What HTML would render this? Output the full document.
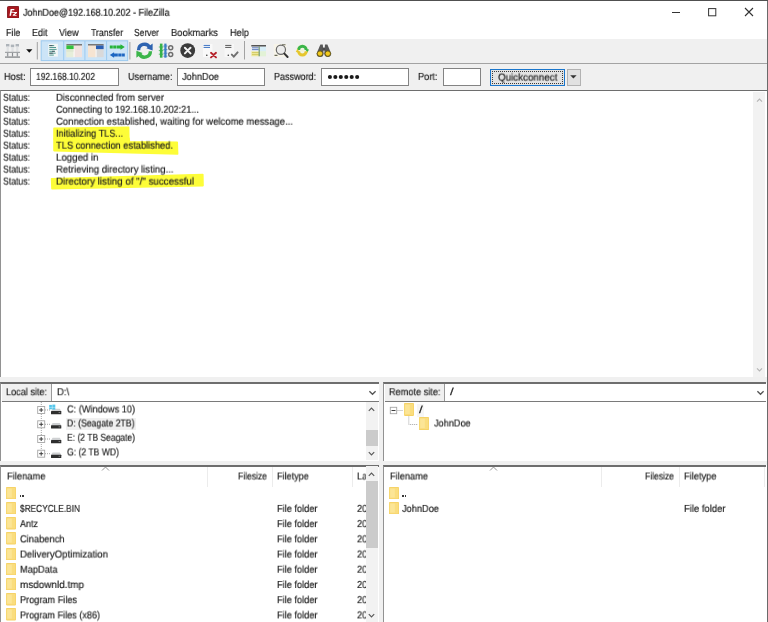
<!DOCTYPE html>
<html>
<head>
<meta charset="utf-8">
<title>JohnDoe@192.168.10.202 - FileZilla</title>
<style>
*{box-sizing:border-box;margin:0;padding:0}
html,body{width:768px;height:622px;overflow:hidden;background:#fff}
body{position:relative;font-family:"Liberation Sans",sans-serif;font-size:10.2px;color:#222}
.abs{position:absolute}
.t{position:absolute;white-space:nowrap;line-height:12px;height:12px;color:#1c1c1c;-webkit-text-stroke:0.18px #1c1c1c;text-rendering:geometricPrecision;transform-origin:0 50%;will-change:transform}
.win-top{left:0;top:0;width:768px;height:1px;background:#505050}
.win-right{left:766.5px;top:1px;width:1.5px;height:621px;background:#6a6a6a}
.toolbar{left:0;top:39px;width:767px;height:24px;background:#f0f0f0}
.qc{left:0;top:63px;width:767px;height:27px;background:#f0f0f0;border-top:1px solid #a3a3a3}
.inp{position:absolute;background:#fff;border:1px solid #838383;height:17.8px;top:68.4px}
.panel{position:absolute;background:#fff;border-top:2px solid #6e6e6e;border-left:1.7px solid #929292}
.sb{position:absolute;background:#f2f2f2}
.thumb{position:absolute;background:#cbcbcb}
.sep{position:absolute;background:#f0f0f0}
.lbl{position:absolute;background:#f0f0f0;border-right:1px solid #9a9a9a}
.hline{position:absolute;height:1px;background:#7a7a7a}
.colsep{position:absolute;width:1px;background:#ececec;top:466.5px;height:20px}
.fold{position:absolute;width:10px;height:12.5px}
.hl{position:absolute;background:#fcfc3a}
.sel{position:absolute;background:#f0f0f0}
</style>
</head>
<body>
<div class="abs win-top"></div>

<!-- app icon -->
<svg class="abs" style="left:6.6px;top:5.6px" width="12.5" height="12.6" viewBox="0 0 14 14">
 <rect x="0.5" y="0.5" width="13" height="13" rx="1.2" fill="#a8181f" stroke="#7d1117" stroke-width="1"/>
 <path d="M2.8 11 L4 3.2 H8.3 L8.1 4.6 H5.5 L5.2 6.3 H7.3 L7.1 7.6 H5 L4.5 11 Z" fill="#fff"/>
 <path d="M7.2 6.6 H11.3 L11.1 7.8 L8.6 9.9 H10.8 L10.6 11 H6.4 L6.6 9.8 L9.1 7.7 H7 Z" fill="#fff"/>
</svg>
<!-- window buttons -->
<svg class="abs" style="left:668px;top:4px" width="96" height="16" viewBox="0 0 96 16">
 <path d="M4 8.5 H12" stroke="#333" stroke-width="1" fill="none"/>
 <rect x="40.6" y="4.6" width="7.2" height="7.2" stroke="#333" stroke-width="1" fill="none"/>
 <path d="M77 4 L85 12 M85 4 L77 12" stroke="#333" stroke-width="1.1" fill="none"/>
</svg>

<!-- toolbar -->
<div class="abs toolbar"></div>
<svg class="abs" style="left:0;top:38px" width="340" height="28" viewBox="0 38 340 28">
 <defs>
  <filter id="b3" x="-20%" y="-20%" width="140%" height="140%"><feGaussianBlur stdDeviation="0.45"/></filter>
 </defs>
 <!-- toggle group bg -->
 <rect x="41.2" y="40.8" width="86.5" height="19.8" fill="#cce4f7" stroke="#9ccaf0" stroke-width="1"/>
 <path d="M63.7 41 V60.5 M84.9 41 V60.5 M106.6 41 V60.5" stroke="#9ccaf0" stroke-width="1"/>
 <!-- separators -->
 <path d="M37.3 42 V59.5 M129.9 42 V59.5 M244.5 41 V59.5" stroke="#a2a2a2" stroke-width="1"/>
 <g filter="url(#b3)">
 <!-- site manager -->
 <g fill="#b9bcc0" stroke="none">
  <rect x="6" y="44" width="3.4" height="2.6" fill="#aeb4ba"/><rect x="10.8" y="44.6" width="3.4" height="2.6" fill="#aeb4ba"/><rect x="15.6" y="44" width="3.4" height="2.6" fill="#aeb4ba"/>
  <rect x="6.6" y="46.5" width="2.2" height="9.5" fill="#dfe1e3"/><rect x="11.4" y="47" width="2.2" height="9" fill="#dfe1e3"/><rect x="16.2" y="46.5" width="2.2" height="9.5" fill="#dfe1e3"/>
  <rect x="5" y="51.8" width="15" height="1.1" fill="#9a9da0"/>
  <rect x="5" y="56.4" width="15" height="1.4" fill="#8b8e91"/>
  <rect x="7.2" y="53" width="1" height="3.5" fill="#8b8e91"/><rect x="12" y="53" width="1" height="3.5" fill="#8b8e91"/><rect x="16.8" y="53" width="1" height="3.5" fill="#8b8e91"/>
 </g>
 <path d="M26.2 49.3 H32.4 L29.3 52.7 Z" fill="#111"/>
 <!-- toggle 1: log doc -->
 <rect x="48.3" y="43.8" width="9.6" height="12.8" fill="#f4f7f6"/>
 <g stroke="#3f8f86" stroke-width="0.9">
  <path d="M49.3 45.6 H54.2 M49.3 47.5 H56 M49.3 49.4 H56.6 M49.3 51.3 H54.8 M49.3 53.2 H55.6 M49.3 55.1 H53.8"/>
 </g>
 <g stroke="#4a5560" stroke-width="0.9"><path d="M49.3 45.6 H52.5 M52 51.3 H54.8 M49.3 53.2 H52.8"/></g>
 <!-- toggle 2: local tree -->
 <rect x="66.4" y="44" width="15.6" height="13.2" fill="#f1e2de"/>
 <rect x="66.4" y="44" width="7.4" height="13.2" fill="#e6eeda"/>
 <rect x="73.6" y="49" width="0.9" height="8.2" fill="#fff"/>
 <rect x="66.4" y="44" width="15.6" height="1.5" fill="#777"/>
 <rect x="66.4" y="45.5" width="7.2" height="3.6" fill="#30c23c"/>
 <rect x="66.4" y="50.5" width="7.2" height="0.9" fill="#d5dfc6"/>
 <!-- toggle 3: remote tree -->
 <rect x="88" y="44" width="15.6" height="13.2" fill="#d9d9d9"/>
 <rect x="88" y="44" width="7.8" height="13.2" fill="#f6e4d2"/>
 <rect x="95.6" y="49" width="0.9" height="8.2" fill="#fff"/>
 <rect x="88" y="44" width="15.6" height="1.5" fill="#777"/>
 <rect x="96" y="45.5" width="7.6" height="3.6" fill="#2b5fb4"/>
 <!-- toggle 4: queue arrows -->
 <path d="M109.8 45.6 H120.5 V44.2 L124.8 47 L120.5 49.8 V48.4 H109.8 Z" fill="#27b43a"/>
 <path d="M124.8 53.6 H114.1 V52.2 L109.8 55 L114.1 57.8 V56.4 H124.8 Z" fill="#1f66c2"/>
 <path d="M113 44.9 V49.1 M116.5 44.9 V49.1 M118.1 52.9 V57.1 M121.6 52.9 V57.1" stroke="#cce4f7" stroke-width="0.7" opacity=".6"/>
 <!-- refresh -->
 <path d="M138.6 50.2 A5.9 5.9 0 0 1 149.6 47.2" stroke="#2e63b0" stroke-width="3.4" fill="none"/>
 <path d="M146.4 48.3 L152.6 43.6 L152.6 50.6 Z" fill="#2e63b0"/>
 <path d="M150.4 51.2 A5.9 5.9 0 0 1 139.4 54.2" stroke="#3bb54a" stroke-width="3.4" fill="none"/>
 <path d="M142.6 53.1 L136.4 57.8 L136.4 50.8 Z" fill="#3bb54a"/>
 <!-- filter -->
 <rect x="159.9" y="43.6" width="2.6" height="14.1" fill="#37b24a"/>
 <rect x="164.3" y="43.6" width="2.2" height="14.1" fill="#3c7ec4"/>
 <path d="M158.8 47 H163.4 M158.8 50.6 H163.4 M158.8 54.2 H163.4" stroke="#37b24a" stroke-width="0.8"/>
 <path d="M163.4 46 H167.4 M163.4 49.6 H167.4 M163.4 53.2 H167.4 M163.4 56.2 H167.4" stroke="#3c7ec4" stroke-width="0.8"/>
 <circle cx="170.7" cy="47.8" r="2" fill="none" stroke="#6e6e6e" stroke-width="1.5"/>
 <circle cx="170.7" cy="54.4" r="2" fill="none" stroke="#6e6e6e" stroke-width="1.5"/>
 <!-- cancel -->
 <circle cx="187.7" cy="50.6" r="7.4" fill="#3a3a3a"/>
 <path d="M184.9 47.8 L190.5 53.4 M190.5 47.8 L184.9 53.4" stroke="#f4f4f4" stroke-width="2" stroke-linecap="round"/>
 <!-- disconnect -->
 <rect x="203" y="44" width="9.5" height="13" fill="#f9f9f9"/>
 <path d="M203.6 45.4 H210 M203.6 47.4 H210" stroke="#3a6fc0" stroke-width="1"/>
 <circle cx="206.8" cy="55.3" r="0.8" fill="#333"/>
 <path d="M211 52.8 L216 57.4 M216 52.8 L211 57.4" stroke="#b5202a" stroke-width="1.9" stroke-linecap="round"/>
 <!-- reconnect -->
 <rect x="224.5" y="44" width="9.5" height="13" fill="#f7f7f7"/>
 <path d="M225.2 45.4 H231.4 M225.2 47.4 H231.4" stroke="#555" stroke-width="1"/>
 <circle cx="228.3" cy="55.3" r="0.8" fill="#333"/>
 <path d="M231.8 54.6 L233.8 56.6 L237.6 52.4" stroke="#707070" stroke-width="2" fill="none" stroke-linecap="round"/>
 <!-- queue view -->
 <rect x="251.3" y="46.5" width="7.6" height="4.8" fill="#e9edf6"/>
 <rect x="259.4" y="46.5" width="6.6" height="4.8" fill="#d8eef8"/>
 <rect x="251.3" y="51.3" width="7.6" height="5" fill="#eeeaa0"/>
 <rect x="259.4" y="51.3" width="6.6" height="5" fill="#e2f2d6"/>
 <rect x="251.3" y="45" width="14.7" height="1.5" fill="#555"/>
 <path d="M252 47.8 H258.6 M252 49.6 H258.6" stroke="#5274b8" stroke-width="0.9"/>
 <path d="M252 52.6 H258.6 M252 54.6 H258.6" stroke="#cfc65a" stroke-width="0.9"/>
 <rect x="258.7" y="46.5" width="0.9" height="9.8" fill="#4d7a4d"/>
 <!-- search -->
 <rect x="273.8" y="44" width="12.6" height="13" fill="#f7f4e9"/>
 <path d="M274.5 55.4 H277.5 M282 44.8 H285.5" stroke="#6a6a5a" stroke-width="1.1"/>
 <circle cx="280.9" cy="49.8" r="4.6" fill="#ececec" stroke="#6a6a6a" stroke-width="1.2"/>
 <path d="M284.4 53.6 L287.6 57" stroke="#333" stroke-width="2" stroke-linecap="round"/>
 <!-- sync browse -->
 <circle cx="302.4" cy="50.4" r="6.4" fill="#eef4e2" opacity=".9"/>
 <path d="M298.6 50 A3.8 3.8 0 0 1 306.2 50" stroke="#3bb54a" stroke-width="3" fill="none"/>
 <path d="M305 49 L309 49.4 L307.4 52.6 Z" fill="#3bb54a"/>
 <path d="M306.2 51.2 A3.8 3.8 0 0 1 298.6 51.2" stroke="#e6c62e" stroke-width="3" fill="none"/>
 <path d="M299.8 52.4 L295.8 52 L297.4 48.8 Z" fill="#e6c62e"/>
 <circle cx="302.4" cy="50.6" r="1.2" fill="#f5f1cf"/>
 <!-- binoculars -->
 <path d="M320.4 44.4 H322.8 L323.6 53.5 A3.4 3.4 0 0 1 316.6 53.5 Z" fill="#575757"/>
 <path d="M325 44.4 H327.4 L331.2 53.5 A3.4 3.4 0 0 1 324.3 53.5 Z" fill="#575757"/>
 <rect x="322.6" y="47.6" width="2.6" height="3" fill="#4a4a4a"/>
 <circle cx="320" cy="53.6" r="2.7" fill="#f2c91e" stroke="#6a5a10" stroke-width="0.9"/>
 <circle cx="327.8" cy="53.6" r="2.7" fill="#f2c91e" stroke="#6a5a10" stroke-width="0.9"/>
 </g>
</svg>


<!-- quickconnect bar -->
<div class="abs qc"></div>
<div class="inp" style="left:30.2px;width:88.4px"></div>
<div class="inp" style="left:177px;width:88px"></div>
<div class="inp" style="left:321px;width:88px"></div>
<div class="inp" style="left:443px;width:38px"></div>
<!-- password dots -->
<svg class="abs" style="left:324px;top:73px" width="40" height="8">
 <g fill="#1a1a1a"><circle cx="5.90" cy="4" r="2.05"/><circle cx="11.35" cy="4" r="2.05"/><circle cx="16.80" cy="4" r="2.05"/><circle cx="22.25" cy="4" r="2.05"/><circle cx="27.70" cy="4" r="2.05"/><circle cx="33.15" cy="4" r="2.05"/></g>
</svg>
<!-- quickconnect button -->
<div class="abs" style="left:490px;top:68.8px;width:74.8px;height:17px;background:#e3e3e3;border:1.6px solid #1a76cc"></div>
<div class="abs" style="left:492px;top:70.6px;width:70.8px;height:13.4px;border:1px dotted #3a3a3a"></div>
<div class="abs" style="left:566.5px;top:68.8px;width:14.6px;height:17px;background:#e1e1e1;border:1px solid #b2b2b2"></div>
<svg class="abs" style="left:570.2px;top:75px" width="7" height="4"><path d="M0.2 0.2 H6.6 L3.4 3.6 Z" fill="#333"/></svg>

<!-- log panel -->
<div class="panel" style="left:0;top:89.7px;width:767px;height:287.3px;border-top-width:1.6px"></div>
<svg class="abs" style="left:44px;top:120px" width="170" height="76" viewBox="44 120 170 76">
 <g fill="#fdfd38" stroke="#fdfd38" stroke-width="1.6" stroke-linejoin="round" filter="url(#b3)">
  <path d="M54 128.4 L128.6 127.2 L128.8 138.2 L54 139 Z"/>
  <path d="M54 139 L129 138.4 L129.4 141.8 L177.2 142.2 L177.6 154 L54 150.6 Z"/>
  <path d="M51.6 178.8 L202.8 174.6 L203 185.6 L52 188.6 Z"/>
 </g>
</svg>
<div class="sb" style="left:753.3px;top:92px;width:11.9px;height:285px;background:#f2f2f2"></div>
<svg class="abs" style="left:754.8px;top:96.5px" width="9" height="6"><path d="M2 4.6 L4.5 2.1 L7 4.6" stroke="#b6b6b6" stroke-width="1.2" fill="none"/></svg>
<svg class="abs" style="left:754.8px;top:367px" width="9" height="6"><path d="M2 1.4 L4.5 3.9 L7 1.4" stroke="#b6b6b6" stroke-width="1.2" fill="none"/></svg>

<!-- splitters -->
<div class="sep" style="left:0;top:377px;width:767px;height:6px"></div>
<div class="sep" style="left:378.5px;top:377px;width:5px;height:245px"></div>
<div class="sep" style="left:0;top:460.5px;width:767px;height:4.5px"></div>

<!-- local site -->
<div class="panel" style="left:0;top:382px;width:378.5px;height:78.5px"></div>
<div class="lbl" style="left:2px;top:384px;width:49.5px;height:17.2px"></div>
<div class="hline" style="left:1.5px;top:400.9px;width:377px"></div>
<svg class="abs" style="left:367.5px;top:390px" width="9" height="6"><path d="M1.4 1.2 L4.5 4.2 L7.6 1.2" stroke="#555" stroke-width="1.35" fill="none"/></svg>
<!-- local tree -->
<div class="sel" style="left:65.5px;top:417.5px;width:70.5px;height:12.8px"></div>
<svg class="abs" style="left:30px;top:401px" width="40" height="60" viewBox="30 401 40 60"><g filter="url(#b3)"><path d="M41.3 402 V453.7" stroke="#9a9a9a" stroke-width="0.9" stroke-dasharray="1 1"/><path d="M45 410 H50" stroke="#9a9a9a" stroke-width="0.9" stroke-dasharray="1 1"/><rect x="37.7" y="406.5" width="7.0" height="7.0" fill="#fff" stroke="#a6a6a6" stroke-width="0.9"/><path d="M39.2 410 H43.2 M41.2 408 V412" stroke="#3c3c3c" stroke-width="1"/><path d="M52.6 408.8 H59.8 L61.3 411.2 H51 Z" fill="#cfd1d3"/><rect x="51" y="411.0" width="10.3" height="3.2" rx="0.5" fill="#2e2e2e"/><rect x="58.6" y="412.09999999999997" width="1.6" height="0.9" fill="#8a8a8a"/><g fill="#55c6eb"><rect x="49.2" y="404.9" width="2.7" height="2.1"/><rect x="52.3" y="404.59999999999997" width="3" height="2.4"/><rect x="49.2" y="407.3" width="2.7" height="2"/><rect x="52.3" y="407.3" width="3" height="2.3"/></g><path d="M45 424.3 H50" stroke="#9a9a9a" stroke-width="0.9" stroke-dasharray="1 1"/><rect x="37.7" y="420.8" width="7.0" height="7.0" fill="#fff" stroke="#a6a6a6" stroke-width="0.9"/><path d="M39.2 424.3 H43.2 M41.2 422.3 V426.3" stroke="#3c3c3c" stroke-width="1"/><path d="M52.6 423.1 H59.8 L61.3 425.5 H51 Z" fill="#cfd1d3"/><rect x="51" y="425.3" width="10.3" height="3.2" rx="0.5" fill="#2e2e2e"/><rect x="58.6" y="426.4" width="1.6" height="0.9" fill="#8a8a8a"/><path d="M45 439 H50" stroke="#9a9a9a" stroke-width="0.9" stroke-dasharray="1 1"/><rect x="37.7" y="435.5" width="7.0" height="7.0" fill="#fff" stroke="#a6a6a6" stroke-width="0.9"/><path d="M39.2 439 H43.2 M41.2 437 V441" stroke="#3c3c3c" stroke-width="1"/><path d="M52.6 437.8 H59.8 L61.3 440.2 H51 Z" fill="#cfd1d3"/><rect x="51" y="440.0" width="10.3" height="3.2" rx="0.5" fill="#2e2e2e"/><rect x="58.6" y="441.09999999999997" width="1.6" height="0.9" fill="#8a8a8a"/><path d="M45 453.7 H50" stroke="#9a9a9a" stroke-width="0.9" stroke-dasharray="1 1"/><rect x="37.7" y="450.2" width="7.0" height="7.0" fill="#fff" stroke="#a6a6a6" stroke-width="0.9"/><path d="M39.2 453.7 H43.2 M41.2 451.7 V455.7" stroke="#3c3c3c" stroke-width="1"/><path d="M52.6 452.5 H59.8 L61.3 454.9 H51 Z" fill="#cfd1d3"/><rect x="51" y="454.7" width="10.3" height="3.2" rx="0.5" fill="#2e2e2e"/><rect x="58.6" y="455.79999999999995" width="1.6" height="0.9" fill="#8a8a8a"/></g></svg>
<div class="sb" style="left:366px;top:402.2px;width:12px;height:57.8px"></div>
<svg class="abs" style="left:366.8px;top:406px" width="9" height="6"><path d="M1.8 4.8 L4.5 2 L7.2 4.8" stroke="#5a5a5a" stroke-width="1.15" fill="none"/></svg>
<div class="thumb" style="left:366px;top:430px;width:12px;height:16px"></div>
<svg class="abs" style="left:366.8px;top:450.5px" width="9" height="6"><path d="M1.8 1.2 L4.5 4 L7.2 1.2" stroke="#5a5a5a" stroke-width="1.15" fill="none"/></svg>

<!-- local list -->
<div class="panel" style="left:0;top:464.8px;width:378.5px;height:158px"></div>
<svg class="abs" style="left:100.5px;top:465.5px" width="9" height="5"><path d="M1 4.5 L4.5 1 L8 4.5" stroke="#8a8a8a" stroke-width="0.9" fill="none"/></svg>
<div class="colsep" style="left:206.5px"></div><div class="colsep" style="left:271.5px"></div><div class="colsep" style="left:351.5px"></div>
<svg class="abs" style="left:6.3px;top:486.8px" width="10" height="12.4" viewBox="0 0 10 12.4" preserveAspectRatio="none"><rect x="0" y="0" width="10" height="12.4" rx="0.8" fill="#f5d266"/><rect x="0.5" y="0.9" width="8.8" height="10.6" fill="#fadd7e"/><rect x="1.2" y="1.6" width="4.6" height="9" fill="#fce596"/></svg>
<svg class="abs" style="left:6.3px;top:501.99px" width="10" height="12.4" viewBox="0 0 10 12.4" preserveAspectRatio="none"><rect x="0" y="0" width="10" height="12.4" rx="0.8" fill="#f5d266"/><rect x="0.5" y="0.9" width="8.8" height="10.6" fill="#fadd7e"/><rect x="1.2" y="1.6" width="4.6" height="9" fill="#fce596"/></svg>
<svg class="abs" style="left:6.3px;top:517.1800000000001px" width="10" height="12.4" viewBox="0 0 10 12.4" preserveAspectRatio="none"><rect x="0" y="0" width="10" height="12.4" rx="0.8" fill="#f5d266"/><rect x="0.5" y="0.9" width="8.8" height="10.6" fill="#fadd7e"/><rect x="1.2" y="1.6" width="4.6" height="9" fill="#fce596"/></svg>
<svg class="abs" style="left:6.3px;top:532.37px" width="10" height="12.4" viewBox="0 0 10 12.4" preserveAspectRatio="none"><rect x="0" y="0" width="10" height="12.4" rx="0.8" fill="#f5d266"/><rect x="0.5" y="0.9" width="8.8" height="10.6" fill="#fadd7e"/><rect x="1.2" y="1.6" width="4.6" height="9" fill="#fce596"/></svg>
<svg class="abs" style="left:6.3px;top:547.5600000000001px" width="10" height="12.4" viewBox="0 0 10 12.4" preserveAspectRatio="none"><rect x="0" y="0" width="10" height="12.4" rx="0.8" fill="#f5d266"/><rect x="0.5" y="0.9" width="8.8" height="10.6" fill="#fadd7e"/><rect x="1.2" y="1.6" width="4.6" height="9" fill="#fce596"/></svg>
<svg class="abs" style="left:6.3px;top:562.75px" width="10" height="12.4" viewBox="0 0 10 12.4" preserveAspectRatio="none"><rect x="0" y="0" width="10" height="12.4" rx="0.8" fill="#f5d266"/><rect x="0.5" y="0.9" width="8.8" height="10.6" fill="#fadd7e"/><rect x="1.2" y="1.6" width="4.6" height="9" fill="#fce596"/></svg>
<svg class="abs" style="left:6.3px;top:577.94px" width="10" height="12.4" viewBox="0 0 10 12.4" preserveAspectRatio="none"><rect x="0" y="0" width="10" height="12.4" rx="0.8" fill="#f5d266"/><rect x="0.5" y="0.9" width="8.8" height="10.6" fill="#fadd7e"/><rect x="1.2" y="1.6" width="4.6" height="9" fill="#fce596"/></svg>
<svg class="abs" style="left:6.3px;top:593.13px" width="10" height="12.4" viewBox="0 0 10 12.4" preserveAspectRatio="none"><rect x="0" y="0" width="10" height="12.4" rx="0.8" fill="#f5d266"/><rect x="0.5" y="0.9" width="8.8" height="10.6" fill="#fadd7e"/><rect x="1.2" y="1.6" width="4.6" height="9" fill="#fce596"/></svg>
<svg class="abs" style="left:6.3px;top:608.32px" width="10" height="12.4" viewBox="0 0 10 12.4" preserveAspectRatio="none"><rect x="0" y="0" width="10" height="12.4" rx="0.8" fill="#f5d266"/><rect x="0.5" y="0.9" width="8.8" height="10.6" fill="#fadd7e"/><rect x="1.2" y="1.6" width="4.6" height="9" fill="#fce596"/></svg>
<div class="sb" style="left:365.5px;top:466px;width:12.5px;height:156px"></div>
<svg class="abs" style="left:367px;top:470.8px" width="9" height="6"><path d="M1.8 4.8 L4.5 2 L7.2 4.8" stroke="#5a5a5a" stroke-width="1.15" fill="none"/></svg>
<div class="thumb" style="left:365.5px;top:480.8px;width:12.5px;height:67px"></div>
<svg class="abs" style="left:367px;top:612.5px" width="9" height="6"><path d="M1.8 1.2 L4.5 4 L7.2 1.2" stroke="#5a5a5a" stroke-width="1.15" fill="none"/></svg>

<!-- remote site -->
<div class="panel" style="left:383.2px;top:382px;width:382.5px;height:78.5px"></div>
<div class="lbl" style="left:385.2px;top:384px;width:59.5px;height:17.2px"></div>
<div class="hline" style="left:384.7px;top:400.9px;width:381px"></div>
<svg class="abs" style="left:756px;top:390px" width="9" height="6"><path d="M1.4 1.2 L4.5 4.2 L7.6 1.2" stroke="#555" stroke-width="1.35" fill="none"/></svg>
<svg class="abs" style="left:386px;top:401px" width="50" height="32" viewBox="386 401 50 32"><g filter="url(#b3)"><path d="M397.5 410.5 H403.5 M408.8 415.5 V424.5 H418" stroke="#9a9a9a" stroke-width="0.9" stroke-dasharray="1 1" fill="none"/><rect x="390.3" y="407.3" width="6.4" height="6.4" fill="#fff" stroke="#a6a6a6" stroke-width="0.9"/><path d="M391.5 410.5 H395.5" stroke="#3c3c3c" stroke-width="1"/></g></svg><div class="sel" style="left:417.3px;top:404px;width:7px;height:12.8px;background:#f6f6f6"></div><svg class="abs" style="left:403.8px;top:402.7px" width="10" height="12.9" viewBox="0 0 10 12.4" preserveAspectRatio="none"><rect x="0" y="0" width="10" height="12.4" rx="0.8" fill="#f5d266"/><rect x="0.5" y="0.9" width="8.8" height="10.6" fill="#fadd7e"/><rect x="1.2" y="1.6" width="4.6" height="9" fill="#fce596"/></svg><svg class="abs" style="left:418.9px;top:416.6px" width="10" height="13" viewBox="0 0 10 12.4" preserveAspectRatio="none"><rect x="0" y="0" width="10" height="12.4" rx="0.8" fill="#f5d266"/><rect x="0.5" y="0.9" width="8.8" height="10.6" fill="#fadd7e"/><rect x="1.2" y="1.6" width="4.6" height="9" fill="#fce596"/></svg>

<!-- remote list -->
<div class="panel" style="left:383.2px;top:464.8px;width:382.5px;height:158px"></div>
<svg class="abs" style="left:488.5px;top:465.5px" width="9" height="5"><path d="M1 4.5 L4.5 1 L8 4.5" stroke="#8a8a8a" stroke-width="0.9" fill="none"/></svg>
<div class="colsep" style="left:601px"></div><div class="colsep" style="left:678.5px"></div><div class="colsep" style="left:764px"></div>
<svg class="abs" style="left:389.4px;top:486.8px" width="10" height="12.4" viewBox="0 0 10 12.4" preserveAspectRatio="none"><rect x="0" y="0" width="10" height="12.4" rx="0.8" fill="#f5d266"/><rect x="0.5" y="0.9" width="8.8" height="10.6" fill="#fadd7e"/><rect x="1.2" y="1.6" width="4.6" height="9" fill="#fce596"/></svg><svg class="abs" style="left:389.4px;top:502.0px" width="10" height="12.4" viewBox="0 0 10 12.4" preserveAspectRatio="none"><rect x="0" y="0" width="10" height="12.4" rx="0.8" fill="#f5d266"/><rect x="0.5" y="0.9" width="8.8" height="10.6" fill="#fadd7e"/><rect x="1.2" y="1.6" width="4.6" height="9" fill="#fce596"/></svg>

<div class="t" style="left:23.00px;top:7px;transform:translateY(0.80px) scaleX(0.8820);color:#0c0c0c">JohnDoe@192.168.10.202 - FileZilla</div>
<div class="t" style="left:5.70px;top:28px;transform:translateY(0.00px) scaleX(0.8708)">File</div>
<div class="t" style="left:31.50px;top:28px;transform:translateY(0.00px) scaleX(0.8826)">Edit</div>
<div class="t" style="left:58.50px;top:28px;transform:translateY(0.00px) scaleX(0.8993)">View</div>
<div class="t" style="left:90.50px;top:28px;transform:translateY(0.00px) scaleX(0.8519)">Transfer</div>
<div class="t" style="left:134.00px;top:28px;transform:translateY(0.00px) scaleX(0.8329)">Server</div>
<div class="t" style="left:171.00px;top:28px;transform:translateY(0.00px) scaleX(0.9224)">Bookmarks</div>
<div class="t" style="left:229.50px;top:28px;transform:translateY(0.00px) scaleX(0.9068)">Help</div>
<div class="t" style="left:3.70px;top:71px;transform:translateY(0.90px) scaleX(0.9083)">Host:</div>
<div class="t" style="left:36.00px;top:71px;transform:translateY(0.90px) scaleX(0.8330)">192.168.10.202</div>
<div class="t" style="left:128.00px;top:71px;transform:translateY(0.90px) scaleX(0.8931)">Username:</div>
<div class="t" style="left:181.50px;top:71px;transform:translateY(0.90px) scaleX(0.9073)">JohnDoe</div>
<div class="t" style="left:274.00px;top:71px;transform:translateY(0.90px) scaleX(0.8830)">Password:</div>
<div class="t" style="left:418.00px;top:71px;transform:translateY(0.90px) scaleX(0.9063)">Port:</div>
<div class="t" style="left:497.70px;top:72px;transform:translateY(0.60px) scaleX(0.9606)">Quickconnect</div>
<div class="t" style="left:3.00px;top:92px;transform:translateY(0.80px) scaleX(0.8512)">Status:</div>
<div class="t" style="left:56.00px;top:92px;transform:translateY(0.80px) scaleX(0.9304)">Disconnected from server</div>
<div class="t" style="left:3.00px;top:104px;transform:translateY(0.77px) scaleX(0.8512)">Status:</div>
<div class="t" style="left:56.00px;top:104px;transform:translateY(0.77px) scaleX(0.8984)">Connecting to 192.168.10.202:21...</div>
<div class="t" style="left:3.00px;top:116px;transform:translateY(0.74px) scaleX(0.8512)">Status:</div>
<div class="t" style="left:56.00px;top:116px;transform:translateY(0.74px) scaleX(0.9342)">Connection established, waiting for welcome message...</div>
<div class="t" style="left:3.00px;top:128px;transform:translateY(0.71px) scaleX(0.8512)">Status:</div>
<div class="t" style="left:56.00px;top:128px;transform:translateY(0.71px) scaleX(0.8986)">Initializing TLS...</div>
<div class="t" style="left:3.00px;top:140px;transform:translateY(0.68px) scaleX(0.8512)">Status:</div>
<div class="t" style="left:56.00px;top:140px;transform:translateY(0.68px) scaleX(0.9141)">TLS connection established.</div>
<div class="t" style="left:3.00px;top:152px;transform:translateY(0.65px) scaleX(0.8512)">Status:</div>
<div class="t" style="left:56.00px;top:152px;transform:translateY(0.65px) scaleX(0.9494)">Logged in</div>
<div class="t" style="left:3.00px;top:164px;transform:translateY(0.62px) scaleX(0.8512)">Status:</div>
<div class="t" style="left:56.00px;top:164px;transform:translateY(0.62px) scaleX(0.9389)">Retrieving directory listing...</div>
<div class="t" style="left:3.00px;top:176px;transform:translateY(0.59px) scaleX(0.8512)">Status:</div>
<div class="t" style="left:56.00px;top:176px;transform:translateY(0.59px) scaleX(0.9567)">Directory listing of "/" successful</div>
<div class="t" style="left:5.80px;top:387px;transform:translateY(0.20px) scaleX(0.8959)">Local site:</div>
<div class="t" style="left:56.70px;top:387px;transform:translateY(0.20px) scaleX(0.9362)">D:\</div>
<div class="t" style="left:67.00px;top:404px;transform:translateY(0.50px) scaleX(0.9031)">C: (Windows 10)</div>
<div class="t" style="left:67.00px;top:418px;transform:translateY(0.50px) scaleX(0.8514)">D: (Seagate 2TB)</div>
<div class="t" style="left:67.00px;top:432px;transform:translateY(0.80px) scaleX(0.8358)">E: (2 TB Seagate)</div>
<div class="t" style="left:67.00px;top:447px;transform:translateY(0.40px) scaleX(0.8453)">G: (2 TB WD)</div>
<div class="t" style="left:6.50px;top:471px;transform:translateY(0.50px) scaleX(0.9187)">Filename</div>
<div class="t" style="left:237.50px;top:471px;transform:translateY(0.50px) scaleX(0.8394)">Filesize</div>
<div class="t" style="left:277.00px;top:471px;transform:translateY(0.50px) scaleX(0.8915)">Filetype</div>
<div class="t" style="left:356.50px;top:471px;transform:translateY(0.50px) scaleX(0.9000);width:9.6px;overflow:hidden">La</div>
<div class="abs" style="left:19.90px;top:495.40px;width:1.15px;height:1.5px;background:#3a3a3a"></div><div class="abs" style="left:22.00px;top:495.40px;width:1.5px;height:1.5px;background:#3a3a3a"></div>
<div class="t" style="left:20.00px;top:503px;transform:translateY(0.91px) scaleX(0.8151)">$RECYCLE.BIN</div>
<div class="t" style="left:277.00px;top:503px;transform:translateY(0.91px) scaleX(0.9053)">File folder</div>
<div class="t" style="left:357.00px;top:503px;transform:translateY(0.91px) scaleX(0.9000);width:9.6px;overflow:hidden">20</div>
<div class="t" style="left:20.00px;top:519px;transform:translateY(0.12px) scaleX(0.8828)">Antz</div>
<div class="t" style="left:277.00px;top:519px;transform:translateY(0.12px) scaleX(0.9053)">File folder</div>
<div class="t" style="left:357.00px;top:519px;transform:translateY(0.12px) scaleX(0.9000);width:9.6px;overflow:hidden">20</div>
<div class="t" style="left:20.00px;top:534px;transform:translateY(0.33px) scaleX(0.9134)">Cinabench</div>
<div class="t" style="left:277.00px;top:534px;transform:translateY(0.33px) scaleX(0.9053)">File folder</div>
<div class="t" style="left:357.00px;top:534px;transform:translateY(0.33px) scaleX(0.9000);width:9.6px;overflow:hidden">20</div>
<div class="t" style="left:20.00px;top:549px;transform:translateY(0.54px) scaleX(0.9420)">DeliveryOptimization</div>
<div class="t" style="left:277.00px;top:549px;transform:translateY(0.54px) scaleX(0.9053)">File folder</div>
<div class="t" style="left:357.00px;top:549px;transform:translateY(0.54px) scaleX(0.9000);width:9.6px;overflow:hidden">20</div>
<div class="t" style="left:20.00px;top:564px;transform:translateY(0.75px) scaleX(0.9070)">MapData</div>
<div class="t" style="left:277.00px;top:564px;transform:translateY(0.75px) scaleX(0.9053)">File folder</div>
<div class="t" style="left:357.00px;top:564px;transform:translateY(0.75px) scaleX(0.9000);width:9.6px;overflow:hidden">20</div>
<div class="t" style="left:20.00px;top:579px;transform:translateY(0.96px) scaleX(0.9743)">msdownld.tmp</div>
<div class="t" style="left:277.00px;top:579px;transform:translateY(0.96px) scaleX(0.9053)">File folder</div>
<div class="t" style="left:357.00px;top:579px;transform:translateY(0.96px) scaleX(0.9000);width:9.6px;overflow:hidden">20</div>
<div class="t" style="left:20.00px;top:595px;transform:translateY(0.17px) scaleX(0.8990)">Program Files</div>
<div class="t" style="left:277.00px;top:595px;transform:translateY(0.17px) scaleX(0.9053)">File folder</div>
<div class="t" style="left:357.00px;top:595px;transform:translateY(0.17px) scaleX(0.9000);width:9.6px;overflow:hidden">20</div>
<div class="t" style="left:20.00px;top:610px;transform:translateY(0.38px) scaleX(0.8943)">Program Files (x86)</div>
<div class="t" style="left:277.00px;top:610px;transform:translateY(0.38px) scaleX(0.9053)">File folder</div>
<div class="t" style="left:357.00px;top:610px;transform:translateY(0.38px) scaleX(0.9000);width:9.6px;overflow:hidden">20</div>
<div class="t" style="left:389.00px;top:387px;transform:translateY(0.20px) scaleX(0.9005)">Remote site:</div>
<div class="t" style="left:449.80px;top:387px;transform:translateY(0.20px) scaleX(1.3000)">/</div>
<div class="t" style="left:418.60px;top:404px;transform:translateY(0.90px) scaleX(1.3000)">/</div>
<div class="t" style="left:433.70px;top:418px;transform:translateY(0.50px) scaleX(0.8999)">JohnDoe</div>
<div class="t" style="left:389.50px;top:471px;transform:translateY(0.50px) scaleX(0.9068)">Filename</div>
<div class="t" style="left:645.00px;top:471px;transform:translateY(0.50px) scaleX(0.8394)">Filesize</div>
<div class="t" style="left:684.00px;top:471px;transform:translateY(0.50px) scaleX(0.9111)">Filetype</div>
<div class="abs" style="left:402.40px;top:495.40px;width:1.15px;height:1.5px;background:#3a3a3a"></div><div class="abs" style="left:404.50px;top:495.40px;width:1.5px;height:1.5px;background:#3a3a3a"></div>
<div class="t" style="left:402.00px;top:503px;transform:translateY(0.91px) scaleX(0.9073)">JohnDoe</div>
<div class="t" style="left:684.00px;top:503px;transform:translateY(0.91px) scaleX(0.9277)">File folder</div>

<div class="abs win-right"></div>
</body>
</html>
